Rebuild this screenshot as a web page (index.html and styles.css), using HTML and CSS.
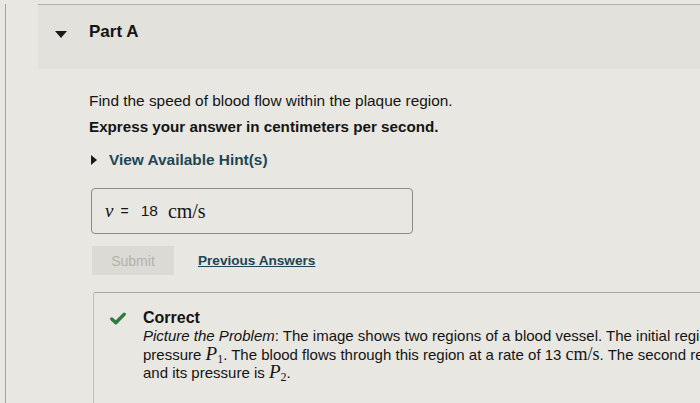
FILE: index.html
```html
<!DOCTYPE html>
<html>
<head>
<meta charset="utf-8">
<link rel="stylesheet" href="styles.css">
</head>
<body>
<div class="page">
  <div class="frame">
    <div class="header">
      <span class="tri-down"></span>
      <span class="part">Part A</span>
    </div>
    <div class="content">
      <p class="q">Find the speed of blood flow within the plaque region.</p>
      <p class="instr">Express your answer in centimeters per second.</p>
      <div class="hint"><span class="tri-right"></span><span class="hint-text">View Available Hint(s)</span></div>
      <div class="answer">
        <span class="var">v</span><span class="eq">=</span><span class="num">18</span><span class="unit">cm/s</span>
      </div>
      <div class="actions">
        <span class="submit">Submit</span>
        <span class="prev">Previous Answers</span>
      </div>
      <div class="feedback">
        <svg class="check" width="16" height="13" viewBox="0 0 16 13"><path d="M1.8 7 L5.8 10.8 L14.2 2.2" fill="none" stroke="#2f7a3c" stroke-width="3.4" stroke-linecap="round" stroke-linejoin="round"/></svg>
        <div class="fb-body">
          <div class="fb-title">Correct</div>
          <div class="fb-text"><i>Picture the Problem</i>: The image shows two regions of a blood vessel. The initial region has a radius and<br>pressure <span class="m">P</span><sub class="s">1</sub>. The blood flows through this region at a rate of 13 <span class="mu">cm/s</span>. The second region is narrower<br>and its pressure is <span class="m">P</span><sub class="s">2</sub>.</div>
        </div>
      </div>
    </div>
  </div>
</div>
</body>
</html>
```

FILE: styles.css
```css
html, body {
  margin: 0;
  padding: 0;
}
body {
  width: 700px;
  height: 403px;
  overflow: hidden;
  background: #e9e7e2;
  font-family: "Liberation Sans", Arial, sans-serif;
  color: #141414;
}
.page {
  height: 403px;
  padding-left: 5px;
}
.frame {
  height: 403px;
  border-left: 1px solid #a3a19c;
  padding-left: 32px;
}
.header {
  margin-top: 4px;
  height: 65px;
  background: #e3e1dc;
  border-top: 1px solid #b2b0aa;
  display: flex;
  align-items: center;
  padding-left: 17px;
  box-sizing: border-box;
}
.tri-down {
  width: 0;
  height: 0;
  border-left: 6px solid transparent;
  border-right: 6px solid transparent;
  border-top: 7px solid #1a1a1a;
  margin-right: 22px;
  margin-top: -6px;
}
.part {
  font-weight: bold;
  font-size: 17px;
  margin-top: -10px;
}
.content {
  padding-left: 51px;
  padding-top: 21px;
}
.q {
  margin: 0;
  font-size: 15.4px;
  line-height: 21px;
}
.instr {
  margin: 6px 0 0 0;
  font-size: 15.2px;
  font-weight: bold;
  line-height: 20px;
}
.hint {
  display: flex;
  align-items: center;
  margin-top: 13px;
  margin-left: 2px;
}
.tri-right {
  width: 0;
  height: 0;
  border-top: 5px solid transparent;
  border-bottom: 5px solid transparent;
  border-left: 6px solid #1a1a1a;
  margin-right: 12px;
}
.hint-text {
  font-weight: bold;
  font-size: 15.4px;
  color: #1d4655;
  line-height: 20px;
}
.answer {
  margin-top: 18px;
  margin-left: 2px;
  width: 322px;
  height: 46px;
  box-sizing: border-box;
  border: 1px solid #8e8c87;
  border-radius: 4px;
  display: flex;
  align-items: center;
  padding-left: 13px;
  font-size: 15.5px;
}
.var {
  font-family: "Liberation Serif", "Times New Roman", serif;
  font-style: italic;
  font-size: 19px;
  margin-right: 7px;
}
.eq {
  font-size: 14px;
  margin-right: 12px;
}
.num {
  margin-right: 10px;
}
.unit {
  font-family: "Liberation Serif", "Times New Roman", serif;
  font-size: 20px;
}
.actions {
  display: flex;
  align-items: center;
  margin-top: 12px;
  margin-left: 3px;
}
.submit {
  width: 82px;
  height: 29px;
  background: #dcdad5;
  color: #b3b1ac;
  font-size: 14px;
  display: flex;
  align-items: center;
  justify-content: center;
  margin-right: 24px;
}
.prev {
  font-weight: bold;
  font-size: 13.6px;
  color: #1d4655;
  text-decoration: underline;
}
.feedback {
  margin-top: 17px;
  margin-left: 4px;
  border-top: 1px solid #a9a7a2;
  border-left: 1px solid #c2c0bb;
  border-radius: 3px 0 0 0;
  display: flex;
  padding-top: 15px;
  padding-left: 16px;
  height: 111px;
  box-sizing: border-box;
  overflow: hidden;
}
.check {
  margin-top: 4px;
  margin-right: 17px;
  flex: none;
}
.fb-body {
  white-space: nowrap;
  overflow: hidden;
}
.fb-title {
  font-weight: bold;
  font-size: 16px;
  line-height: 19px;
}
.fb-text {
  font-size: 15px;
  line-height: 18.5px;
}
.m {
  font-family: "Liberation Serif", "Times New Roman", serif;
  font-style: italic;
  font-size: 19px;
  line-height: 0;
}
.s {
  font-family: "Liberation Serif", "Times New Roman", serif;
  font-size: 12px;
  vertical-align: -3px;
  line-height: 0;
}
.mu {
  font-family: "Liberation Serif", "Times New Roman", serif;
  font-size: 18px;
  line-height: 0;
}
```
